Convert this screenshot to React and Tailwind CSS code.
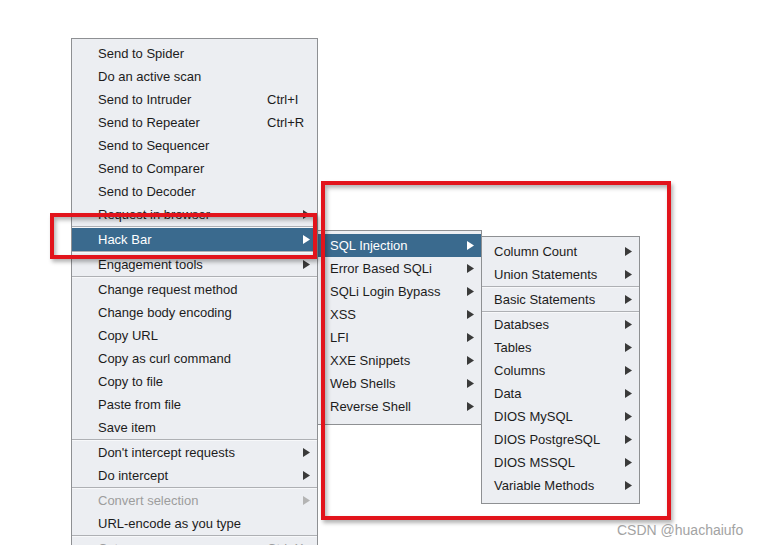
import React from 'react';

const Arrow = ({ className = 'text-[#3a3a3a]' }) => (
  <svg className={className} width="7" height="9" viewBox="0 0 7 9">
    <path d="M0 0L7 4.5L0 9Z" fill="currentColor" />
  </svg>
);

const mainItems = [
  { label: 'Send to Spider' },
  { label: 'Do an active scan' },
  { label: 'Send to Intruder', key: 'Ctrl+I' },
  { label: 'Send to Repeater', key: 'Ctrl+R' },
  { label: 'Send to Sequencer' },
  { label: 'Send to Comparer' },
  { label: 'Send to Decoder' },
  { label: 'Request in browser', sub: true },
  { sep: true },
  { label: 'Hack Bar', sub: true, active: true },
  { sep: true },
  { label: 'Engagement tools', sub: true },
  { sep: true },
  { label: 'Change request method' },
  { label: 'Change body encoding' },
  { label: 'Copy URL' },
  { label: 'Copy as curl command' },
  { label: 'Copy to file' },
  { label: 'Paste from file' },
  { label: 'Save item' },
  { sep: true },
  { label: "Don't intercept requests", sub: true },
  { label: 'Do intercept', sub: true },
  { sep: true },
  { label: 'Convert selection', sub: true, disabled: true },
  { label: 'URL-encode as you type' },
  { sep: true },
  { label: 'Cut', key: 'Ctrl+X', disabled: true },
];

const hackItems = [
  { label: 'SQL Injection', sub: true, active: true },
  { label: 'Error Based SQLi', sub: true },
  { label: 'SQLi Login Bypass', sub: true },
  { label: 'XSS', sub: true },
  { label: 'LFI', sub: true },
  { label: 'XXE Snippets', sub: true },
  { label: 'Web Shells', sub: true },
  { label: 'Reverse Shell', sub: true },
];

const sqlItems = [
  { label: 'Column Count', sub: true },
  { label: 'Union Statements', sub: true },
  { sep: true },
  { label: 'Basic Statements', sub: true },
  { sep: true },
  { label: 'Databses', sub: true },
  { label: 'Tables', sub: true },
  { label: 'Columns', sub: true },
  { label: 'Data', sub: true },
  { label: 'DIOS MySQL', sub: true },
  { label: 'DIOS PostgreSQL', sub: true },
  { label: 'DIOS MSSQL', sub: true },
  { label: 'Variable Methods', sub: true },
];

const Separator = () => (
  <div className="h-[2px] border-t border-[#aeb0b4] bg-[#f7f8fa]" />
);

const MenuRow = ({ item, padLeft, withKeys }) => {
  const color = item.active
    ? 'bg-[#3a6a8e] text-white'
    : item.disabled
    ? 'text-[#9d9d9d]'
    : 'text-[#1c1c1c]';
  const arrowColor = item.active
    ? 'text-white'
    : item.disabled
    ? 'text-[#b4b4b4]'
    : 'text-[#3a3a3a]';
  return (
    <div className={`flex items-center h-[23px] ${padLeft} pr-[7px] ${color}`}>
      <span className="flex-1 whitespace-nowrap">{item.label}</span>
      {withKeys ? (
        <span className="w-[43px] flex items-center justify-between whitespace-nowrap">
          <span>{item.key || ''}</span>
          {item.sub && <Arrow className={arrowColor} />}
        </span>
      ) : (
        item.sub && <Arrow className={arrowColor} />
      )}
    </div>
  );
};

const Menu = ({ items, className, padLeft, withKeys }) => (
  <div
    className={`absolute bg-[#eceef2] border border-[#8e9093] pt-[3px] pb-[6px] ${className}`}
  >
    {items.map((item, i) =>
      item.sep ? (
        <Separator key={i} />
      ) : (
        <MenuRow key={i} item={item} padLeft={padLeft} withKeys={withKeys} />
      )
    )}
  </div>
);

export default function App() {
  return (
    <div
      className="relative w-[770px] h-[545px] bg-white overflow-hidden text-[13px]"
      style={{ fontFamily: '"Liberation Sans", Arial, sans-serif' }}
    >
      {/* main context menu */}
      <Menu items={mainItems} className="left-[71px] top-[38px] w-[247px]" padLeft="pl-[26px]" withKeys />

      {/* Hack Bar submenu */}
      <Menu items={hackItems} className="left-[317px] top-[230px] w-[165px]" padLeft="pl-[12px]" />

      {/* SQL Injection submenu */}
      <Menu items={sqlItems} className="left-[481px] top-[236px] w-[159px]" padLeft="pl-[12px]" />

      {/* red annotation boxes */}
      <div className="absolute left-[50px] top-[213px] w-[267px] h-[46px] border-4 border-[#e2141c] shadow-[2px_3px_4px_rgba(0,0,0,0.3),inset_2px_3px_4px_rgba(0,0,0,0.3)]" />
      <div className="absolute left-[321px] top-[181px] w-[350px] h-[339px] border-4 border-[#e2141c] shadow-[2px_3px_4px_rgba(0,0,0,0.3),inset_2px_3px_4px_rgba(0,0,0,0.3)]" />

      {/* watermark */}
      <div className="absolute left-[617px] top-[520px] text-[14px] text-[#a3a3a3] whitespace-nowrap">
        CSDN @huachaiufo
      </div>
    </div>
  );
}
